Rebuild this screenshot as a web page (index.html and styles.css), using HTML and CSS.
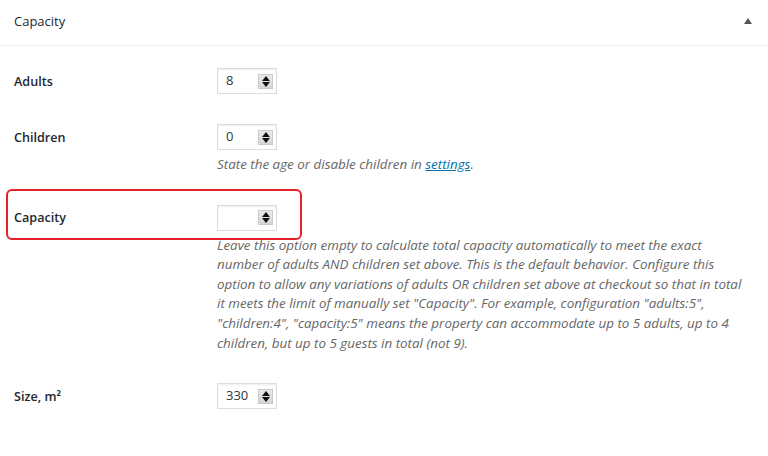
FILE: index.html
```html
<!DOCTYPE html>
<html lang="en">
<head>
    <meta charset="UTF-8">
    <title>Capacity</title>
    <link rel="stylesheet" href="styles.css">
</head>
<body>
    <div class="postbox">
        <div class="postbox-header">
            <h2>Capacity</h2>
            <span class="toggle-indicator"></span>
        </div>
        <div class="inside">
            <div class="field">
                <label class="field-label">Adults</label>
                <div class="field-control">
                    <div class="number-input"><span class="value">8</span><span class="spinner"></span></div>
                </div>
            </div>
            <div class="field">
                <label class="field-label">Children</label>
                <div class="field-control">
                    <div class="number-input"><span class="value">0</span><span class="spinner"></span></div>
                    <p class="description">State the age or disable children in <a href="#">settings</a>.</p>
                </div>
            </div>
            <div class="field field-highlight">
                <span class="highlight"></span>
                <label class="field-label">Capacity</label>
                <div class="field-control">
                    <div class="number-input"><span class="value"></span><span class="spinner"></span></div>
                    <p class="description">Leave this option empty to calculate total capacity automatically to meet the exact number of adults AND children set above. This is the default behavior. Configure this option to allow any variations of adults OR children set above at checkout so that in total it meets the limit of manually set "Capacity". For example, configuration "adults:5", "children:4", "capacity:5" means the property can accommodate up to 5 adults, up to 4 children, but up to 5 guests in total (not 9).</p>
                </div>
            </div>
            <div class="field">
                <label class="field-label">Size, m&sup2;</label>
                <div class="field-control">
                    <div class="number-input"><span class="value">330</span><span class="spinner"></span></div>
                </div>
            </div>
        </div>
    </div>
</body>
</html>
```

FILE: styles.css
```css
* { box-sizing: border-box; }

body {
    margin: 0;
    background: #fff;
    color: #23282d;
    font: 13px/1.5 "Open Sans", "Noto Sans", sans-serif;
}

.postbox {
    background: #fff;
}

.postbox-header {
    display: flex;
    align-items: center;
    justify-content: space-between;
    height: 46px;
    padding: 0 16px 2px 14px;
    border-bottom: 1px solid #eee;
}

.postbox-header h2 {
    margin: 0;
    font-size: 13px;
    font-weight: 400;
    color: #23282d;
}

.toggle-indicator {
    width: 0;
    height: 0;
    border-left: 4px solid transparent;
    border-right: 4px solid transparent;
    border-bottom: 6px solid #555;
    margin-bottom: 2px;
}

.inside {
    padding: 7px 0 30px;
}

.field {
    position: relative;
    display: grid;
    grid-template-columns: 203px 527px;
    padding: 15px 20px 15px 14px;
}

.field-label {
    display: flex;
    align-items: center;
    height: 26px;
    padding-top: 2px;
    font-weight: 600;
    font-size: 12.6px;
    color: #23282d;
}

.number-input {
    display: flex;
    align-items: center;
    justify-content: space-between;
    width: 60px;
    height: 26px;
    padding: 0 3px 0 8px;
    border: 1px solid #ddd;
    box-shadow: inset 0 1px 2px rgba(0, 0, 0, .07);
    color: #32373c;
    font-size: 13px;
}

.spinner {
    position: relative;
    width: 15px;
    height: 15px;
    background: linear-gradient(#eaeaea, #d6d6d6);
    border: 1px solid #c8c8c8;
}

.spinner::before,
.spinner::after {
    content: "";
    position: absolute;
    left: 3px;
    border-left: 4px solid transparent;
    border-right: 4px solid transparent;
}

.spinner::before {
    top: 1px;
    border-bottom: 5px solid #111;
}

.spinner::after {
    bottom: 1px;
    border-top: 5px solid #111;
}

.description {
    margin: 5px 0 0;
    font-style: italic;
    color: #666;
    font-size: 13.4px;
    line-height: 19.6px;
}

.description a {
    color: #0073aa;
}

.highlight {
    position: absolute;
    left: 6px;
    top: -1px;
    width: 296px;
    height: 51px;
    border: 2px solid #e8202a;
    border-radius: 6px;
}
```
